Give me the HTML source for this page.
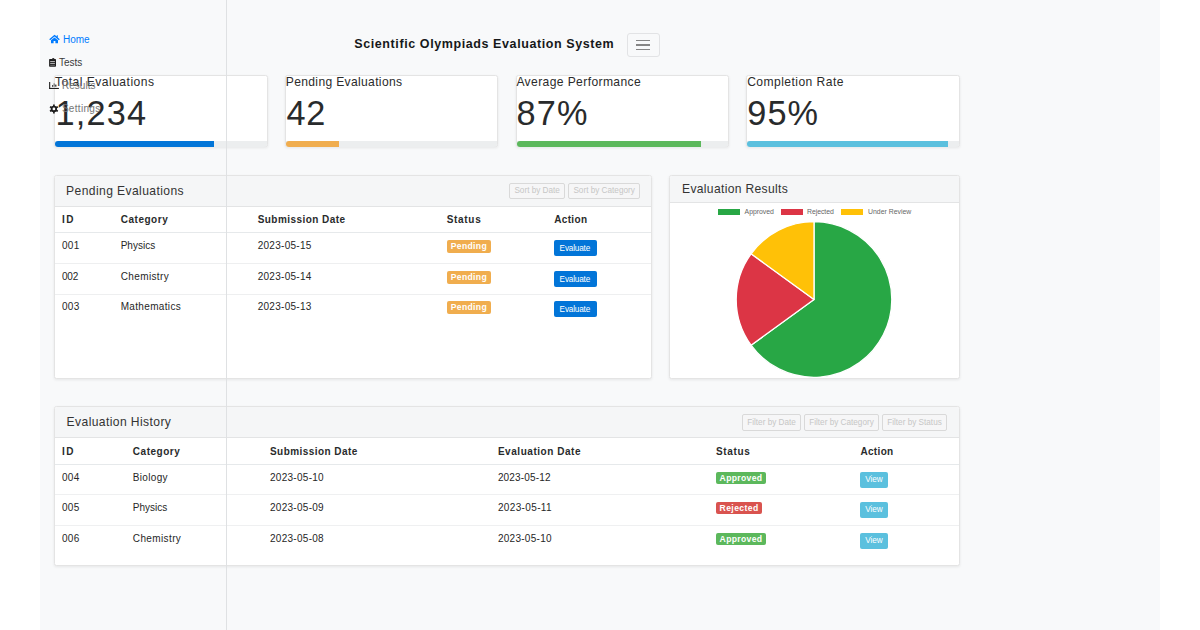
<!DOCTYPE html>
<html><head><meta charset="utf-8">
<style>
*{box-sizing:border-box;margin:0;padding:0}
html,body{width:1200px;height:630px;overflow:hidden;background:#fff;font-family:"Liberation Sans",sans-serif}
.r{position:absolute}
.t{position:absolute;line-height:1;white-space:nowrap}
</style></head><body>
<div class="r" style="left:40px;top:0px;width:1120.00px;height:630.00px;background:#f8f9fa"></div>
<div class="r" style="left:54px;top:75px;width:214.00px;height:72.00px;background:#fff;border:1px solid #e4e4e4;border-radius:2.5px;box-shadow:0 1px 3px rgba(0,0,0,.08)"></div>
<div class="r" style="left:55px;top:140.5px;width:212.00px;height:6.00px;background:#eceeef;border-radius:0 0 3px 3px"></div>
<div class="r" style="left:55px;top:140.5px;width:159.0px;height:6px;background:#0275d8;border-radius:3px 0 0 3px"></div>
<div class="r" style="left:285px;top:75px;width:213.00px;height:72.00px;background:#fff;border:1px solid #e4e4e4;border-radius:2.5px;box-shadow:0 1px 3px rgba(0,0,0,.08)"></div>
<div class="r" style="left:286px;top:140.5px;width:211.00px;height:6.00px;background:#eceeef;border-radius:0 0 3px 3px"></div>
<div class="r" style="left:286px;top:140.5px;width:52.8px;height:6px;background:#f0ad4e;border-radius:3px 0 0 3px"></div>
<div class="r" style="left:516px;top:75px;width:213.00px;height:72.00px;background:#fff;border:1px solid #e4e4e4;border-radius:2.5px;box-shadow:0 1px 3px rgba(0,0,0,.08)"></div>
<div class="r" style="left:517px;top:140.5px;width:211.00px;height:6.00px;background:#eceeef;border-radius:0 0 3px 3px"></div>
<div class="r" style="left:517px;top:140.5px;width:183.6px;height:6px;background:#5cb85c;border-radius:3px 0 0 3px"></div>
<div class="r" style="left:746px;top:75px;width:214.00px;height:72.00px;background:#fff;border:1px solid #e4e4e4;border-radius:2.5px;box-shadow:0 1px 3px rgba(0,0,0,.08)"></div>
<div class="r" style="left:747px;top:140.5px;width:212.00px;height:6.00px;background:#eceeef;border-radius:0 0 3px 3px"></div>
<div class="r" style="left:747px;top:140.5px;width:201.4px;height:6px;background:#5bc0de;border-radius:3px 0 0 3px"></div>
<span class="t" style="left:55.00px;top:76px;font-size:12.1px;color:#2b2b2b;letter-spacing:0.472px">Total Evaluations</span>
<span class="t" style="left:55.50px;top:96px;font-size:34.3px;color:#292b2c;letter-spacing:1.212px">1,234</span>
<span class="t" style="left:285.80px;top:76px;font-size:12.1px;color:#2b2b2b;letter-spacing:0.332px">Pending Evaluations</span>
<span class="t" style="left:286.40px;top:96px;font-size:34.3px;color:#292b2c;letter-spacing:0.826px">42</span>
<span class="t" style="left:516.40px;top:76px;font-size:12.1px;color:#2b2b2b;letter-spacing:0.385px">Average Performance</span>
<span class="t" style="left:516.60px;top:96px;font-size:34.3px;color:#292b2c;letter-spacing:1.126px">87%</span>
<span class="t" style="left:747.20px;top:76px;font-size:12.1px;color:#2b2b2b;letter-spacing:0.442px">Completion Rate</span>
<span class="t" style="left:747.20px;top:96px;font-size:34.3px;color:#292b2c;letter-spacing:1.126px">95%</span>
<div class="r" style="left:54px;top:175px;width:598.00px;height:204.00px;background:#fff;border:1px solid #e4e4e4;border-radius:2.5px;box-shadow:0 1px 3px rgba(0,0,0,.08)"></div>
<div class="r" style="left:55px;top:176px;width:596.00px;height:31.00px;background:#f5f6f7;border-bottom:1px solid #e3e4e5;border-radius:2px 2px 0 0"></div>
<div class="r" style="left:509px;top:183px;width:56.00px;height:16.00px;border:1px solid #d9d9d9;border-radius:2px;background:#f6f6f7"></div>
<div class="r" style="left:568px;top:183px;width:72.00px;height:16.00px;border:1px solid #d9d9d9;border-radius:2px;background:#f6f6f7"></div>
<span class="t" style="left:514.40px;top:187px;font-size:8.2px;color:#c6c6c6">Sort by Date</span>
<span class="t" style="left:573.40px;top:187px;font-size:8.2px;color:#c6c6c6">Sort by Category</span>
<span class="t" style="left:66.10px;top:185px;font-size:12.1px;color:#333;letter-spacing:0.404px">Pending Evaluations</span>
<span class="t" style="left:61.90px;top:215px;font-size:10.0px;color:#292b2c;font-weight:bold;letter-spacing:1.681px">ID</span>
<span class="t" style="left:120.70px;top:215px;font-size:10.0px;color:#292b2c;font-weight:bold;letter-spacing:0.527px">Category</span>
<span class="t" style="left:257.70px;top:215px;font-size:10.0px;color:#292b2c;font-weight:bold;letter-spacing:0.443px">Submission Date</span>
<span class="t" style="left:446.70px;top:215px;font-size:10.0px;color:#292b2c;font-weight:bold;letter-spacing:0.695px">Status</span>
<span class="t" style="left:554.20px;top:215px;font-size:10.0px;color:#292b2c;font-weight:bold;letter-spacing:0.345px">Action</span>
<div class="r" style="left:55px;top:232px;width:596.00px;height:1.00px;background:#e6e9eb"></div>
<div class="r" style="left:55px;top:263px;width:596.00px;height:1.00px;background:#eeeff0"></div>
<div class="r" style="left:55px;top:294px;width:596.00px;height:1.00px;background:#eeeff0"></div>
<span class="t" style="left:61.90px;top:241px;font-size:10.0px;color:#262626;letter-spacing:0.353px">001</span>
<span class="t" style="left:120.70px;top:241px;font-size:10.0px;color:#262626;letter-spacing:0.014px">Physics</span>
<span class="t" style="left:257.70px;top:241px;font-size:10.0px;color:#262626;letter-spacing:0.280px">2023-05-15</span>
<div class="r" style="left:446.5px;top:240px;width:44.50px;height:12.50px;background:#f0ad4e;border-radius:2px"></div>
<span class="t" style="left:450.70px;top:242px;font-size:8.6px;color:#fff;font-weight:bold;letter-spacing:0.346px">Pending</span>
<div class="r" style="left:554px;top:240px;width:42.50px;height:16.00px;background:#0275d8;border-radius:2px"></div>
<span class="t" style="left:559.60px;top:245px;font-size:8.2px;color:#fff;letter-spacing:-0.173px">Evaluate</span>
<span class="t" style="left:61.90px;top:272px;font-size:10.0px;color:#262626;letter-spacing:-0.147px">002</span>
<span class="t" style="left:120.70px;top:272px;font-size:10.0px;color:#262626;letter-spacing:0.381px">Chemistry</span>
<span class="t" style="left:257.70px;top:272px;font-size:10.0px;color:#262626;letter-spacing:0.280px">2023-05-14</span>
<div class="r" style="left:446.5px;top:271px;width:44.50px;height:12.50px;background:#f0ad4e;border-radius:2px"></div>
<span class="t" style="left:450.70px;top:273px;font-size:8.6px;color:#fff;font-weight:bold;letter-spacing:0.346px">Pending</span>
<div class="r" style="left:554px;top:271px;width:42.50px;height:16.00px;background:#0275d8;border-radius:2px"></div>
<span class="t" style="left:559.60px;top:276px;font-size:8.2px;color:#fff;letter-spacing:-0.173px">Evaluate</span>
<span class="t" style="left:61.90px;top:302px;font-size:10.0px;color:#262626;letter-spacing:0.353px">003</span>
<span class="t" style="left:120.70px;top:302px;font-size:10.0px;color:#262626;letter-spacing:0.338px">Mathematics</span>
<span class="t" style="left:257.70px;top:302px;font-size:10.0px;color:#262626;letter-spacing:0.280px">2023-05-13</span>
<div class="r" style="left:446.5px;top:301px;width:44.50px;height:12.50px;background:#f0ad4e;border-radius:2px"></div>
<span class="t" style="left:450.70px;top:303px;font-size:8.6px;color:#fff;font-weight:bold;letter-spacing:0.346px">Pending</span>
<div class="r" style="left:554px;top:301px;width:42.50px;height:16.00px;background:#0275d8;border-radius:2px"></div>
<span class="t" style="left:559.60px;top:306px;font-size:8.2px;color:#fff;letter-spacing:-0.173px">Evaluate</span>
<div class="r" style="left:669px;top:175px;width:291.00px;height:204.00px;background:#fff;border:1px solid #e4e4e4;border-radius:2.5px;box-shadow:0 1px 3px rgba(0,0,0,.08)"></div>
<div class="r" style="left:670px;top:176px;width:289.00px;height:27.00px;background:#f5f6f7;border-bottom:1px solid #e3e4e5;border-radius:2px 2px 0 0"></div>
<span class="t" style="left:682.00px;top:183px;font-size:12.1px;color:#333;letter-spacing:0.327px">Evaluation Results</span>
<svg class="r" style="left:0;top:0" width="1200" height="630" viewBox="0 0 1200 630">
<rect x="718" y="209" width="22" height="6" fill="#28a745"/>
<rect x="781" y="209" width="22" height="6" fill="#dc3545"/>
<rect x="841" y="209" width="22" height="6" fill="#ffc107"/>
<g stroke="#fff" stroke-width="1.3" stroke-linejoin="round">
<path d="M814,299.5 L814.00,221.70 A77.8,77.8 0 1 1 751.06,345.23 Z" fill="#28a745"/>
<path d="M814,299.5 L751.06,345.23 A77.8,77.8 0 0 1 751.06,253.77 Z" fill="#dc3545"/>
<path d="M814,299.5 L751.06,253.77 A77.8,77.8 0 0 1 814.00,221.70 Z" fill="#ffc107"/>
</g></svg>
<span class="t" style="left:744.60px;top:209px;font-size:6.9px;color:#666;letter-spacing:-0.038px">Approved</span>
<span class="t" style="left:807.00px;top:209px;font-size:6.9px;color:#666;letter-spacing:-0.052px">Rejected</span>
<span class="t" style="left:868.00px;top:209px;font-size:6.9px;color:#666">Under Review</span>
<div class="r" style="left:54px;top:406px;width:906.00px;height:160.00px;background:#fff;border:1px solid #e4e4e4;border-radius:2.5px;box-shadow:0 1px 3px rgba(0,0,0,.08)"></div>
<div class="r" style="left:55px;top:407px;width:904.00px;height:31.00px;background:#f5f6f7;border-bottom:1px solid #e3e4e5;border-radius:2px 2px 0 0"></div>
<div class="r" style="left:742px;top:414px;width:59.00px;height:17.00px;border:1px solid #d9d9d9;border-radius:2px;background:#f6f6f7"></div>
<div class="r" style="left:804px;top:414px;width:75.00px;height:17.00px;border:1px solid #d9d9d9;border-radius:2px;background:#f6f6f7"></div>
<div class="r" style="left:882px;top:414px;width:65.00px;height:17.00px;border:1px solid #d9d9d9;border-radius:2px;background:#f6f6f7"></div>
<span class="t" style="left:747.20px;top:419px;font-size:8.2px;color:#c6c6c6">Filter by Date</span>
<span class="t" style="left:809.20px;top:419px;font-size:8.2px;color:#c6c6c6">Filter by Category</span>
<span class="t" style="left:887.20px;top:419px;font-size:8.2px;color:#c6c6c6">Filter by Status</span>
<span class="t" style="left:66.60px;top:416px;font-size:12.1px;color:#333;letter-spacing:0.402px">Evaluation History</span>
<span class="t" style="left:61.90px;top:447px;font-size:10.0px;color:#292b2c;font-weight:bold;letter-spacing:1.681px">ID</span>
<span class="t" style="left:132.80px;top:447px;font-size:10.0px;color:#292b2c;font-weight:bold;letter-spacing:0.527px">Category</span>
<span class="t" style="left:270.00px;top:447px;font-size:10.0px;color:#292b2c;font-weight:bold;letter-spacing:0.443px">Submission Date</span>
<span class="t" style="left:497.90px;top:447px;font-size:10.0px;color:#292b2c;font-weight:bold;letter-spacing:0.544px">Evaluation Date</span>
<span class="t" style="left:715.90px;top:447px;font-size:10.0px;color:#292b2c;font-weight:bold;letter-spacing:0.695px">Status</span>
<span class="t" style="left:860.40px;top:447px;font-size:10.0px;color:#292b2c;font-weight:bold;letter-spacing:0.345px">Action</span>
<div class="r" style="left:55px;top:464px;width:904.00px;height:1.00px;background:#e6e9eb"></div>
<div class="r" style="left:55px;top:494px;width:904.00px;height:1.00px;background:#eff0f1"></div>
<div class="r" style="left:55px;top:525px;width:904.00px;height:1.00px;background:#eff0f1"></div>
<span class="t" style="left:61.90px;top:473px;font-size:10.0px;color:#262626;letter-spacing:0.353px">004</span>
<span class="t" style="left:132.80px;top:473px;font-size:10.0px;color:#262626;letter-spacing:0.337px">Biology</span>
<span class="t" style="left:270.00px;top:473px;font-size:10.0px;color:#262626;letter-spacing:0.280px">2023-05-10</span>
<span class="t" style="left:497.90px;top:473px;font-size:10.0px;color:#262626;letter-spacing:0.169px">2023-05-12</span>
<div class="r" style="left:715.5px;top:472px;width:50.30px;height:12.00px;background:#5cb85c;border-radius:2px"></div>
<span class="t" style="left:719.60px;top:474px;font-size:8.6px;color:#fff;font-weight:bold;letter-spacing:0.336px">Approved</span>
<div class="r" style="left:860px;top:472px;width:28.00px;height:15.50px;background:#5bc0de;border-radius:2px"></div>
<span class="t" style="left:865.20px;top:476px;font-size:8.2px;color:#fff">View</span>
<span class="t" style="left:61.90px;top:503px;font-size:10.0px;color:#262626;letter-spacing:0.353px">005</span>
<span class="t" style="left:132.80px;top:503px;font-size:10.0px;color:#262626;letter-spacing:0.014px">Physics</span>
<span class="t" style="left:270.00px;top:503px;font-size:10.0px;color:#262626;letter-spacing:0.280px">2023-05-09</span>
<span class="t" style="left:497.90px;top:503px;font-size:10.0px;color:#262626;letter-spacing:0.363px">2023-05-11</span>
<div class="r" style="left:715.5px;top:502px;width:46.30px;height:12.00px;background:#d9534f;border-radius:2px"></div>
<span class="t" style="left:719.60px;top:504px;font-size:8.6px;color:#fff;font-weight:bold;letter-spacing:0.387px">Rejected</span>
<div class="r" style="left:860px;top:502px;width:28.00px;height:15.50px;background:#5bc0de;border-radius:2px"></div>
<span class="t" style="left:865.20px;top:506px;font-size:8.2px;color:#fff">View</span>
<span class="t" style="left:61.90px;top:534px;font-size:10.0px;color:#262626;letter-spacing:0.353px">006</span>
<span class="t" style="left:132.80px;top:534px;font-size:10.0px;color:#262626;letter-spacing:0.381px">Chemistry</span>
<span class="t" style="left:270.00px;top:534px;font-size:10.0px;color:#262626;letter-spacing:0.280px">2023-05-08</span>
<span class="t" style="left:497.90px;top:534px;font-size:10.0px;color:#262626;letter-spacing:0.280px">2023-05-10</span>
<div class="r" style="left:715.5px;top:533px;width:50.30px;height:12.00px;background:#5cb85c;border-radius:2px"></div>
<span class="t" style="left:719.60px;top:535px;font-size:8.6px;color:#fff;font-weight:bold;letter-spacing:0.336px">Approved</span>
<div class="r" style="left:860px;top:533px;width:28.00px;height:15.50px;background:#5bc0de;border-radius:2px"></div>
<span class="t" style="left:865.20px;top:537px;font-size:8.2px;color:#fff">View</span>
<div class="r" style="left:226px;top:0px;width:1.00px;height:630.00px;background:#dfe1e3"></div>
<svg class="r" style="left:0;top:0" width="300" height="130" viewBox="0 0 300 130">
<path d="M54.5 34.7 L49.2 39.3 L50.2 40.3 L54.5 36.6 L58.8 40.3 L59.8 39.3 L57.8 37.5 V35.2 H56.8 V36.6 Z M51 40.2 V43.2 H53.6 V41 H55.4 V43.2 H58 V40.2 L54.5 37.4 Z" fill="#007bff"/>
<rect x="49.1" y="59.1" width="6.9" height="7.7" rx="0.7" fill="#1e1e1e"/><rect x="52.2" y="57.9" width="2.1" height="1.6" rx="0.6" fill="#333"/>
<rect x="50.2" y="61.2" width="4.7" height="0.9" fill="#d8d8d8"/><rect x="50.2" y="63.2" width="4.7" height="0.9" fill="#d0d0d0"/><rect x="50.2" y="65" width="4.7" height="0.7" fill="#777"/>
<rect x="49.1" y="82" width="1.1" height="7" fill="#222"/><rect x="49.1" y="87.9" width="9.8" height="1.1" fill="#222"/>
<rect x="52.0" y="85.2" width="1.2" height="1.5" fill="#222"/><rect x="53.6" y="83.4" width="1.1" height="3.3" fill="#666"/><rect x="55.2" y="84.6" width="1.2" height="2.1" fill="#222"/>
<g transform="translate(53.9,108.9)"><circle r="3.2" fill="#1e1e1e"/><g stroke="#1e1e1e" stroke-width="1.7"><path d="M0 -4.5V4.5M-3.9 -2.25L3.9 2.25M3.9 -2.25L-3.9 2.25"/></g><circle r="1.35" fill="#fbfbfb"/></g>
</svg>
<span class="t" style="left:63.00px;top:35px;font-size:10.0px;color:#007bff">Home</span>
<span class="t" style="left:59.00px;top:58px;font-size:10.0px;color:#3a3a3a;letter-spacing:-0.035px">Tests</span>
<span class="t" style="left:61.90px;top:81px;font-size:10.0px;color:#767676;letter-spacing:0.064px">Results</span>
<span class="t" style="left:61.90px;top:104px;font-size:10.0px;color:#767676;letter-spacing:0.308px">Settings</span>
<span class="t" style="left:354.30px;top:38px;font-size:12.5px;color:#161819;font-weight:bold;letter-spacing:0.590px">Scientific Olympiads Evaluation System</span>
<div class="r" style="left:627px;top:33px;width:33.00px;height:24.00px;border:1px solid #e2e3e5;border-radius:3px;background:#f8f9fa"></div>
<div class="r" style="left:636px;top:39.8px;width:14.00px;height:1.30px;background:#858585"></div>
<div class="r" style="left:636px;top:44.3px;width:14.00px;height:1.30px;background:#858585"></div>
<div class="r" style="left:636px;top:48.7px;width:14.00px;height:1.30px;background:#858585"></div>
</body></html>
